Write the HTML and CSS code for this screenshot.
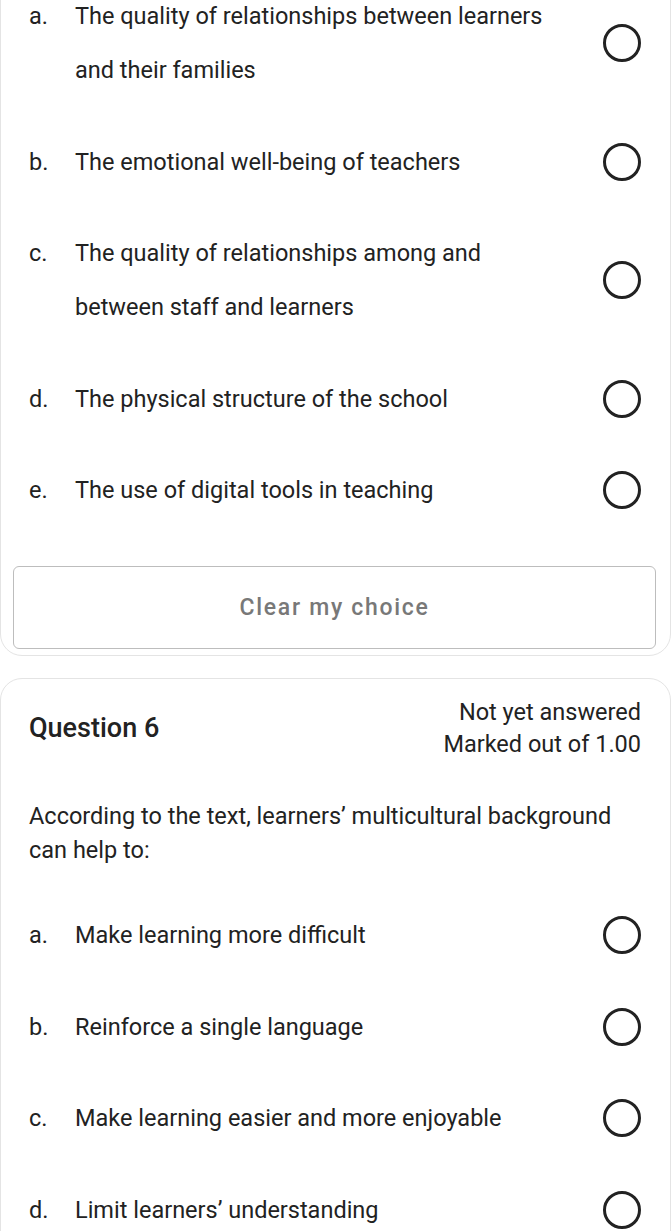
FILE: index.html
```html
<!DOCTYPE html>
<html lang="en">
<head>
<meta charset="utf-8">
<link rel="stylesheet" href="styles.css">
</head>
<body>
<div class="card card-prev">
  <div class="answer">
    <div class="opt"><span class="lbl">a.</span><span class="txt">The quality of relationships between learners and their families</span><span class="radio"></span></div>
    <div class="opt"><span class="lbl">b.</span><span class="txt">The emotional well-being of teachers</span><span class="radio"></span></div>
    <div class="opt"><span class="lbl">c.</span><span class="txt">The quality of relationships among and between staff and learners</span><span class="radio"></span></div>
    <div class="opt"><span class="lbl">d.</span><span class="txt">The physical structure of the school</span><span class="radio"></span></div>
    <div class="opt"><span class="lbl">e.</span><span class="txt">The use of digital tools in teaching</span><span class="radio"></span></div>
  </div>
  <div class="clear-wrap"><button class="clear">Clear my choice</button></div>
</div>
<div class="card card-q">
  <div class="qhead">
    <h2 class="qno">Question 6</h2>
    <div class="info"><div>Not yet answered</div><div>Marked out of 1.00</div></div>
  </div>
  <div class="qtext">According to the text, learners’ multicultural background can help to:</div>
  <div class="answer">
    <div class="opt"><span class="lbl">a.</span><span class="txt">Make learning more difficult</span><span class="radio"></span></div>
    <div class="opt"><span class="lbl">b.</span><span class="txt">Reinforce a single language</span><span class="radio"></span></div>
    <div class="opt"><span class="lbl">c.</span><span class="txt">Make learning easier and more enjoyable</span><span class="radio"></span></div>
    <div class="opt"><span class="lbl">d.</span><span class="txt">Limit learners’ understanding</span><span class="radio"></span></div>
  </div>
</div>
</body>
</html>
```
FILE: styles.css
```css
* { box-sizing: border-box; }
html, body { margin: 0; padding: 0; background: #fff; }
body {
  font-family: Roboto, "Liberation Sans", sans-serif;
  color: #222;
  font-size: 23.5px;
  overflow: hidden;
}
.card {
  width: 100%;
  border: 1px solid #e4e4e4;
  border-radius: 22px;
  background: #fff;
}
.card-prev {
  margin-top: -30.8px;
  padding-bottom: 6px;
}
.card-q {
  margin-top: 22px;
  padding-top: 17px;
}
.answer { padding: 0 29px 0 28px; }
.opt {
  display: flex;
  align-items: center;
  padding: 18.8px 0;
}
.lbl { width: 46px; flex: none; line-height: 54px; align-self: flex-start; }
.txt { flex: 1; line-height: 54px; padding-right: 40px; }
.radio {
  flex: none;
  width: 38px;
  height: 38px;
  border: 3px solid #222;
  border-radius: 50%;
}
.clear-wrap { padding: 30px 14px 0 12px; }
.clear {
  display: block;
  width: 100%;
  height: 83px;
  padding-bottom: 2px;
  border: 1px solid #bdbdbd;
  border-radius: 6px;
  background: #fff;
  font-family: Roboto, "Liberation Sans", sans-serif;
  font-size: 23px;
  font-weight: 500;
  letter-spacing: 1.7px;
  color: #787878;
}
.qhead {
  display: flex;
  justify-content: space-between;
  align-items: center;
  padding: 0 29px 0 28px;
}
.qno { margin: 0; font-size: 27px; font-weight: 500; }
.info { text-align: right; line-height: 32px; }
.qtext {
  padding: 39px 29px 0 28px;
  line-height: 34px;
  margin-bottom: 22px;
}
```
